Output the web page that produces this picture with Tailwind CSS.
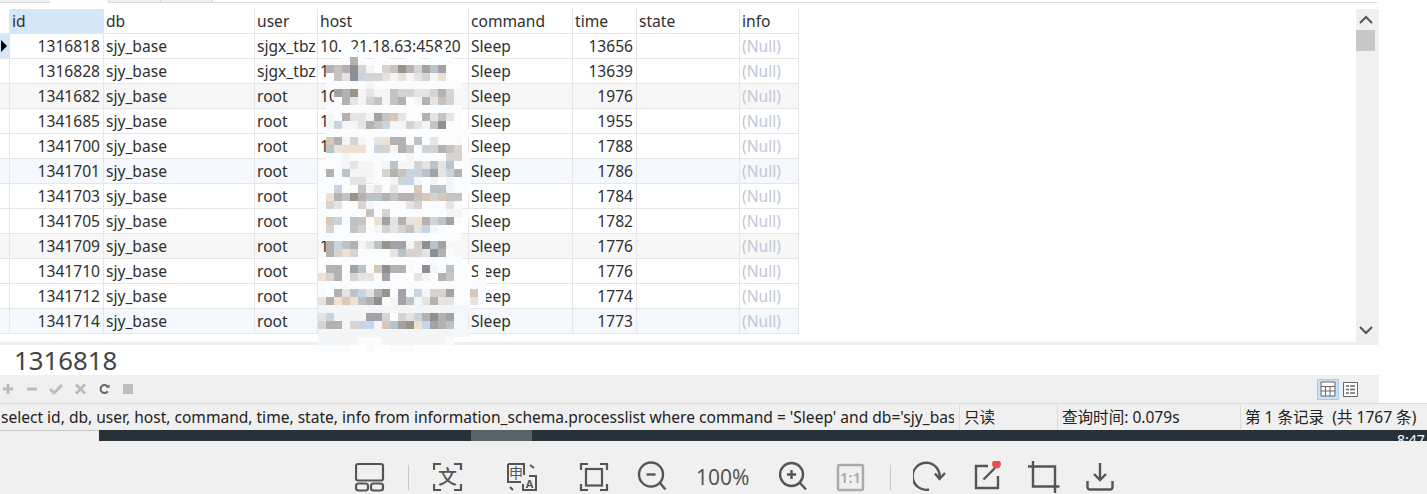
<!DOCTYPE html>
<html lang="zh-CN">
<head>
  <meta charset="UTF-8">
  <meta name="viewport" content="width=device-width, initial-scale=1.0">
  <title>processlist</title>
  <script src="https://cdn.jsdelivr.net/npm/@tailwindcss/browser@4"></script>
</head>
<body class="bg-white font-['Noto_Sans','Noto_Sans_CJK_SC',sans-serif] text-[15.6px] text-[#2f2f2f] antialiased">
  <div class="relative w-[1427px] h-[494px] overflow-hidden">

    <!-- tab strip -->
    <div class="flex h-[9px] w-[1377px] items-start">
      <div class="w-[50px] h-[3px] bg-[#f0f0f0] border-b border-[#d8d8d8]"></div>
      <div class="w-[58px] h-[3px] bg-white"></div>
      <div class="w-[52px] h-[3px] bg-[#f0f0f0] border-b border-l border-[#d8d8d8]"></div>
      <div class="w-[52px] h-[3px] bg-[#f0f0f0] border-b border-l border-[#d8d8d8]"></div>
      <div class="flex-1 h-[3px] border-b border-l border-[#d8d8d8]"></div>
    </div>

    <!-- grid + scrollbar -->
    <div class="flex h-[333px] w-[1379px]">
      <div id="grid" class="w-[1356px] grid grid-cols-[10px_94px_151px_63px_151px_104px_64px_103px_59px] auto-rows-[25px] justify-start content-start"></div>
      <div class="w-[23px] bg-[#f0f0f0] relative">
        <svg class="ml-[2px] mt-[5px]" width="16" height="12" viewBox="0 0 16 12"><path d="M2 9L8 3L14 9" fill="none" stroke="#555" stroke-width="2"/></svg>
        <div class="absolute left-0 top-[21px] w-[19px] h-[21px] bg-[#c8c8c8]"></div>
        <svg class="absolute left-[2px] bottom-[6px]" width="16" height="12" viewBox="0 0 16 12"><path d="M2 3L8 9L14 3" fill="none" stroke="#555" stroke-width="2"/></svg>
      </div>
    </div>

    <!-- value preview -->
    <div class="w-[1378px] h-[33px] border-t-[3px] border-[#eeeeee] pl-[14px] text-[25.800px] leading-[31px] text-[#444]">1316818</div>

    <!-- grid toolbar -->
    <div class="w-[1379px] h-[28px] bg-[#f0f0f0] flex items-center">
      <svg class="ml-[2px]" width="12" height="12" viewBox="0 0 12 12"><path d="M6 1V11M1 6H11" stroke="#bdbdbd" stroke-width="3"/></svg>
      <svg class="ml-[12px]" width="12" height="12" viewBox="0 0 12 12"><path d="M1 6H11" stroke="#bdbdbd" stroke-width="3"/></svg>
      <svg class="ml-[11px]" width="14" height="12" viewBox="0 0 14 12"><path d="M1 6L5 10L13 2" fill="none" stroke="#bdbdbd" stroke-width="3"/></svg>
      <svg class="ml-[12px]" width="11" height="12" viewBox="0 0 11 12"><path d="M1 1.500L10 10.500M10 1.500L1 10.500" stroke="#bdbdbd" stroke-width="3"/></svg>
      <svg class="ml-[13px]" width="11" height="12" viewBox="0 0 12 12"><path d="M9.500 8.500A4.300 4.300 0 1 1 9.500 3.500" fill="none" stroke="#666" stroke-width="2.200"/><path d="M7.500 4.500H11.500V0.800Z" fill="#666"/></svg>
      <div class="ml-[13px] w-[10px] h-[10px] bg-[#bdbdbd]"></div>
      <div class="ml-auto mr-[21px] flex items-center gap-[4px]">
        <div class="w-[22px] h-[21px] bg-[#cce0f5] border border-[#a5cbee] flex items-center justify-center">
          <svg width="16" height="16" viewBox="0 0 16 16"><path d="M1 1H15V15H1ZM1 5.500H15M1 10H15M5.500 5.500V15M10 5.500V15" fill="#fff" stroke="#666" stroke-width="1"/></svg>
        </div>
        <svg width="15" height="15" viewBox="0 0 15 15"><path d="M0.500 0.500H14.500V14.500H0.500Z" fill="#fff" stroke="#666"/><path d="M3 4H6M7 4H12M3 7.500H6M7 7.500H12M3 11H6M7 11H12" stroke="#666" stroke-width="1.500"/></svg>
      </div>
    </div>

    <!-- status bar -->
    <div class="h-[27px] bg-[#f0f0f0] border-t border-[#d9d9d9] flex leading-[26px] text-[#222] text-[15.550px]">
      <div class="w-[960px] pl-[1px] pr-[5px] border-r border-[#dcdcdc]">
        <div class="overflow-hidden whitespace-nowrap">select id, db, user, host, command, time, state, info from information_schema.processlist where command = 'Sleep' and db='sjy_base'</div>
      </div>
      <div class="w-[98px] pl-[4px] border-r border-[#dcdcdc]">只读</div>
      <div class="w-[183px] pl-[4px] border-r border-[#dcdcdc]">查询时间: 0.079s</div>
      <div class="flex-1 pl-[4px] whitespace-pre">第 1 条记录  (共 1767 条)</div>
    </div>

    <!-- window behind -->
    <div class="h-[11px] flex bg-[#263238]">
      <div class="w-[99px] bg-[#f0f0f0] border-t border-[#c8c8c8]"></div>
      <div class="ml-[372px] w-[61px] bg-[#566467]"></div>
      <div class="ml-auto mr-[1px] w-[29px] overflow-hidden text-[14px] leading-[20px] text-white">8:47</div>
    </div>

    <!-- viewer toolbar -->
    <div class="h-[53px] bg-[#f0f0f0] pt-[20px] flex items-start">
      <svg class="ml-[355px]" width="30" height="32" viewBox="355 461 30 32" fill="none" stroke="#555" stroke-width="2.200">
        <rect x="356" y="464" width="27" height="16.500" rx="2"/>
        <rect x="356" y="483.500" width="12" height="7" rx="2.500"/>
        <rect x="371" y="483.500" width="12" height="7" rx="2.500"/>
      </svg>
      <div class="ml-[23px] mt-[4px] w-[1px] h-[25px] bg-[#c9c9d3]"></div>
      <svg class="ml-[24px]" width="30" height="32" viewBox="433 461 30 32" fill="none" stroke="#555" stroke-width="2.200">
        <path d="M434 470V464H441M454 464H461V470M434 484V490H441M454 490H461V484"/>
        <text x="447.500" y="484" text-anchor="middle" font-size="19" fill="#555" stroke="none" font-family="Noto Sans CJK SC" font-weight="500">文</text>
      </svg>
      <svg class="ml-[44px]" width="31" height="32" viewBox="507 461 31 32" fill="none" stroke="#555" stroke-width="2">
        <path d="M508 464H524V475M521 482H508V464"/>
        <text x="516" y="478" text-anchor="middle" font-size="14" fill="#555" stroke="none" font-family="Noto Sans CJK SC">申</text>
        <path d="M530 465L534 468M510 487L513 490"/>
        <path d="M529 476H536V490H523V484"/>
        <text x="529.500" y="488" text-anchor="middle" font-size="11" font-weight="700" fill="#555" stroke="none">A</text>
      </svg>
      <svg class="ml-[41px]" width="30" height="32" viewBox="579 461 30 32" fill="none" stroke="#555" stroke-width="2.200">
        <path d="M581 470V464H588M600 464H607V470M581 484V490H588M600 490H607V484"/>
        <rect x="586" y="469" width="16" height="16.500"/>
      </svg>
      <svg class="ml-[28px]" width="30" height="32" viewBox="637 461 30 32" fill="none" stroke="#555" stroke-width="2.400">
        <circle cx="651" cy="474.500" r="12"/>
        <path d="M660 483L665.500 489.500"/>
        <path d="M646.500 474.500H655.500"/>
      </svg>
      <div class="ml-[29px] w-[54px] text-[21px] leading-[32px] text-[#555] whitespace-nowrap">100%</div>
      <svg class="ml-[29px]" width="29" height="32" viewBox="779 461 29 32" fill="none" stroke="#555" stroke-width="2.400">
        <circle cx="791.500" cy="474.500" r="11.500"/>
        <path d="M800 483L806 489.500"/>
        <path d="M787 474.500H796M791.500 470V479"/>
      </svg>
      <svg class="ml-[28px]" width="30" height="32" viewBox="836 461 30 32">
        <rect x="838" y="465" width="25" height="25" rx="1.500" fill="none" stroke="#aaa" stroke-width="2.500"/>
        <text x="850.500" y="483" text-anchor="middle" font-size="15" font-weight="600" fill="#aaa">1:1</text>
      </svg>
      <div class="ml-[24px] mt-[4px] w-[1px] h-[25px] bg-[#c9c9d3]"></div>
      <svg class="ml-[22px]" width="33" height="32" viewBox="913 461 33 32" fill="none" stroke="#555" stroke-width="2.400">
        <path d="M939.500 478.500A13.500 13.500 0 1 0 929 489.500"/>
        <path d="M935 473.500L939.500 479L945 473"/>
      </svg>
      <svg class="ml-[28px]" width="28" height="32" viewBox="974 461 28 32" fill="none" stroke="#555" stroke-width="2.400">
        <path d="M988 466H976V488H998V476"/>
        <path d="M983.500 479.500L995 468"/>
        <circle cx="996.500" cy="464" r="4.500" fill="#ea4f4f" stroke="none"/>
      </svg>
      <svg class="ml-[25px]" width="33" height="32" viewBox="1027 461 33 32" fill="none" stroke="#555" stroke-width="2.400">
        <path d="M1033 461V486.500H1059.500M1028 466.500H1055V493"/>
      </svg>
      <svg class="ml-[26px]" width="28" height="32" viewBox="1086 461 28 32" fill="none" stroke="#555" stroke-width="2.400">
        <path d="M1100 463V480M1094 474L1100 480L1106 474"/>
        <path d="M1087.500 481V487Q1087.500 489.500 1090 489.500H1110Q1112.500 489.500 1112.500 487V481"/>
      </svg>
    </div>

    <!-- pixelated patch over the host column -->
    <svg id="mosaic" class="absolute left-0 top-0 pointer-events-none" width="1427" height="494"></svg>
  </div>

  <script>
    var rows = [
      [1316818, 'sjgx_tbz', '10.  21.18.63:45820', 13656],
      [1316828, 'sjgx_tbz', '1', 13639],
      [1341682, 'root', '10', 1976],
      [1341685, 'root', '10', 1955],
      [1341700, 'root', '1', 1788],
      [1341701, 'root', '', 1786],
      [1341703, 'root', '', 1784],
      [1341705, 'root', '', 1782],
      [1341709, 'root', '1', 1776],
      [1341710, 'root', '', 1776],
      [1341712, 'root', '', 1774],
      [1341714, 'root', '', 1773]
    ];
    var line = 'border-b border-r border-[#e6e6e6] px-[2px] leading-[25px] whitespace-nowrap overflow-hidden ';
    var html = '<div class="border-b border-r border-[#e6e6e6]"></div>';
    ['id', 'db', 'user', 'host', 'command', 'time', 'state', 'info'].forEach(function (name, i) {
      html += '<div class="' + line + (i === 0 ? 'bg-[#d5e7f7]' : '') + '">' + name + '</div>';
    });
    rows.forEach(function (r, i) {
      var bg = (i === 2 || i === 8) ? 'bg-[#f7f7f7] ' : (i === 5 || i === 11) ? 'bg-[#f5f9fd] ' : '';
      html += '<div class="border-b border-r border-[#e6e6e6] flex items-center ' + (i === 0 ? 'bg-[#d5e7f7]' : bg) + '">' +
        (i === 0 ? '<svg width="8" height="12" viewBox="0 0 8 12"><path d="M1 0L7 6L1 12Z" fill="#000"/></svg>' : '') + '</div>';
      html += '<div class="' + line + bg + 'text-right !pr-[3px]">' + r[0] + '</div>';
      html += '<div class="' + line + bg + '">sjy_base</div>';
      html += '<div class="' + line + bg + '">' + r[1] + '</div>';
      html += '<div class="' + line + bg + 'whitespace-pre">' + r[2] + '</div>';
      html += '<div class="' + line + bg + '">Sleep</div>';
      html += '<div class="' + line + bg + 'text-right !pr-[3px]">' + r[3] + '</div>';
      html += '<div class="' + line + bg + '"></div>';
      html += '<div class="' + line + bg + 'text-[#c3c7d6]">(Null)</div>';
    });
    document.getElementById('grid').innerHTML = html;

    // mosaic cells: 8px blocks starting at x=318
    var colors = {
      w: '#fbfcfd', v: '#f3f5f7', e: '#e6e4e2', d: '#d6d3d1', c: '#c6c3c1', g: '#b4b1b0', h: '#a3a2a6',
      k: '#8d8e96', m: '#9a9488', t: '#efe0d0', u: '#d8c8b8', b: '#c8d4e0', s: '#b8c4c8', B: '#c0d8f0'
    };
    var cells = [
      [41,  '...w'],
      [49,  '...ww..........w'],
      [57,  '...wgw.ww..ww.www'],
      [65,  '.gcgkdv.dcmgdhsh'],
      [73,  '.wcekbddevevedvt'],
      [81,  '.wwwwwvwwwwwwwwwww'],
      [89,  '..hgmvevvcddeedgd'],
      [97,  '..wgevdcvcgwvgecd'],
      [105, '.wwwwwwwwwwwwwwwww'],
      [113, '.vwgeevhcuewwgecew'],
      [121, '.vbvvegcbvvdevckww'],
      [129, '.wwwwwwwwwwwwwwwwww'],
      [137, '.ugvdvwetggwswewww'],
      [145, '.setttwbdvgcwbdgcd'],
      [153, '.wwvwwwwwwwvwwwwddw'],
      [161, 'wwwvevvwvsvvdesesww'],
      [169, 'wgwsvvvwdgcbbshebgw'],
      [177, 'wwwwee.wwvbbvwvwvww'],
      [185, 'wwbwwcvewewwuwssvww'],
      [193, '.tgcmgssgcggcuducc'],
      [201, 'wdewwdvwwwwedwwwew'],
      [209, 'wwwwwwcwdwwwwwwwvvw'],
      [217, 'wubwsc.thegetgdshw'],
      [225, 'wdwwcdwvdedcebvw'],
      [233, 'wwwwwwwwwwwwwwwwww'],
      [241, '.gbsgvesmhhvdksh'],
      [249, '.gdtdwwwwesddekgw'],
      [257, 'wwwwwwwwwwwwwwwwww'],
      [265, 'wggwhswukggw.kvwsww.w'],
      [273, 'tdgwdeewhww.evwgcww.w'],
      [281, 'wwwwwwwwwwwwwwwwwwwww'],
      [289, 'w.gesbegmwhwbvddhwwuw'],
      [297, 'egtutsgkwvhsvegeewwew'],
      [305, 'vvvvvvvvvvvvvvvvvvv'],
      [313, 'ebvvvvhhdwdebgkgh'],
      [321, 'dggvdbBvushmtBhgs'],
      [329, 'vvvvvvvvvvvvvvvvvvv'],
      [337, 'vvvvvwwwvvvvvvvvw'],
      [345, 'wwww..w..www']
    ];
    var svg = '';
    cells.forEach(function (row) {
      row[1].split('').forEach(function (ch, i) {
        if (colors[ch]) svg += '<rect x="' + (318 + 8 * i) + '" y="' + row[0] + '" width="8" height="8" fill="' + colors[ch] + '"/>';
      });
    });
    document.getElementById('mosaic').innerHTML = svg;
  </script>
</body>
</html>
